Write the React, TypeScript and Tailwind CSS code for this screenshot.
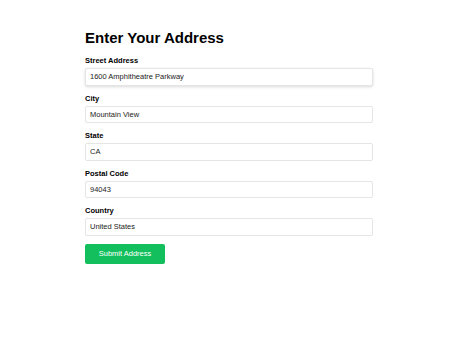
import React from 'react';

const fields = [
  { label: 'Street Address', value: '1600 Amphitheatre Parkway', focus: true },
  { label: 'City', value: 'Mountain View' },
  { label: 'State', value: 'CA' },
  { label: 'Postal Code', value: '94043' },
  { label: 'Country', value: 'United States' },
];

export default function App() {
  return (
    <div className="min-h-[353px] bg-white font-['Liberation_Sans',Arial,sans-serif] text-black">
      <div className="ml-[85px] w-[288px] pt-[29px]">
        <h1 className="text-[15px] font-bold leading-[18px]">Enter Your Address</h1>
        <form className="mt-[9px] flex flex-col gap-[8px]" onSubmit={(e) => e.preventDefault()}>
          {fields.map((f) => (
            <div key={f.label} className="flex flex-col">
              <label className="text-[7.5px] font-bold leading-[10px]">{f.label}</label>
              <input
                defaultValue={f.value}
                className={
                  'mt-[2px] h-[17.5px] w-full rounded-[2px] border border-[#e5e5e5] bg-white px-[4px] text-[7.5px] text-[#222] outline-none' +
                  (f.focus ? ' shadow-[0_1px_3px_rgba(0,0,0,0.15)]' : '')
                }
              />
            </div>
          ))}
          <button
            type="submit"
            className="h-[20px] w-[80px] rounded-[2px] bg-[#12bf5c] text-[7.5px] text-white"
          >
            Submit Address
          </button>
        </form>
      </div>
    </div>
  );
}
